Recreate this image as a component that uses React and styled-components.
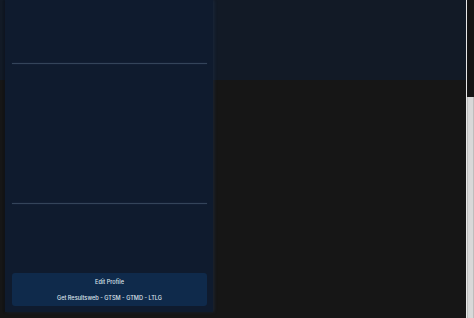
import React from "react";
import styled, { createGlobalStyle } from "styled-components";

const Global = createGlobalStyle`
  html, body { margin: 0; padding: 0; height: 100%; background: #161616; }
  #root { height: 100%; }
  * { box-sizing: border-box; }
`;

const Frame = styled.div`
  display: flex;
  height: 100vh;
  width: 100vw;
  overflow: hidden;
  font-family: Inter, "Noto Sans", sans-serif;
`;

const Page = styled.div`
  flex: 1;
  display: grid;
  grid-template-columns: 5px 208px 1fr;
  grid-template-rows: 80px 1fr 6px;
  background: #161616;
`;

const HeaderBand = styled.div`
  grid-row: 1;
  grid-column: 1 / -1;
  background: #121a26;
`;

const Sidebar = styled.aside`
  grid-row: 1 / 3;
  grid-column: 2;
  z-index: 1;
  background: #0f1b2e;
  box-shadow: 1px 0 3px rgba(40, 60, 90, 0.45), -1px 0 2px rgba(0, 0, 0, 0.4);
  display: flex;
  flex-direction: column;
  padding: 0 6px 6px 7px;
`;

const Section = styled.div`
  height: ${(p) => p.$h}px;
  flex: none;
`;

const Divider = styled.hr`
  margin: 0;
  border: none;
  height: 1px;
  background: #34445a;
  box-shadow: 0 0 2px rgba(60, 80, 110, 0.4);
  flex: none;
`;

const Spacer = styled.div`
  flex: 1;
`;

const ActionBox = styled.div`
  background: #0f2a4b;
  border-radius: 3px;
  display: flex;
  flex-direction: column;
  align-items: center;
  padding: 4px 0 3px;
  gap: 6px;
`;

const Action = styled.button`
  background: none;
  border: none;
  padding: 0;
  color: #dde4ec;
  font-family: Inter, "Noto Sans", sans-serif;
  font-size: 5.6px;
  font-weight: 500;
  line-height: 10px;
  cursor: pointer;
`;

const Scrollbar = styled.div`
  width: 8px;
  flex: none;
  background: #1c1c1c;
  display: flex;
  flex-direction: column;
  border-left: 1px solid #e8e8e8;
`;

const ScrollTrack = styled.div`
  height: ${(p) => p.$h}px;
  flex: none;
  background: #141414;
`;

const ScrollThumb = styled.div`
  flex: 1;
  background: #d8d8d8;
  border-left: 1px solid #bdbdbd;
  border-right: 1px solid #bdbdbd;
`;

export default function App() {
  return (
    <>
      <Global />
      <Frame>
        <Page>
          <HeaderBand />
          <Sidebar>
            <Section $h={63} />
            <Divider />
            <Section $h={139} />
            <Divider />
            <Spacer />
            <ActionBox>
              <Action>Edit Profile</Action>
              <Action>Get Resultsweb - GTSM - GTMD - LTLG</Action>
            </ActionBox>
          </Sidebar>
        </Page>
        <Scrollbar>
          <ScrollTrack $h={97} />
          <ScrollThumb />
        </Scrollbar>
      </Frame>
    </>
  );
}
